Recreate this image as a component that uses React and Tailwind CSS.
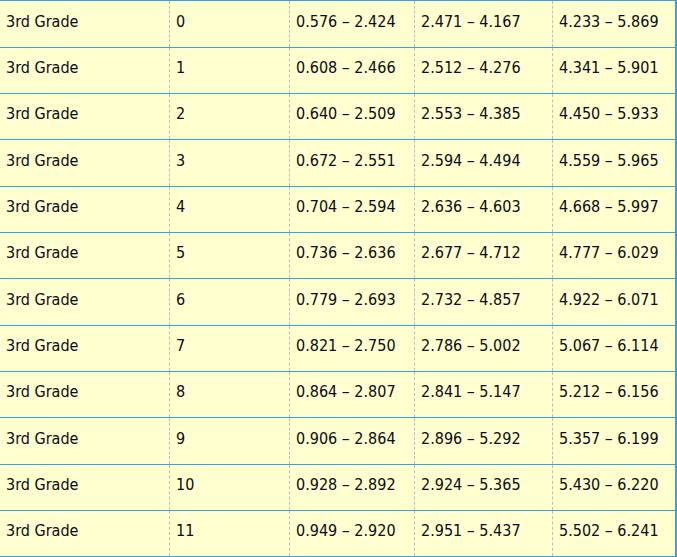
const rows = [
  ["0", "0.576 – 2.424", "2.471 – 4.167", "4.233 – 5.869"],
  ["1", "0.608 – 2.466", "2.512 – 4.276", "4.341 – 5.901"],
  ["2", "0.640 – 2.509", "2.553 – 4.385", "4.450 – 5.933"],
  ["3", "0.672 – 2.551", "2.594 – 4.494", "4.559 – 5.965"],
  ["4", "0.704 – 2.594", "2.636 – 4.603", "4.668 – 5.997"],
  ["5", "0.736 – 2.636", "2.677 – 4.712", "4.777 – 6.029"],
  ["6", "0.779 – 2.693", "2.732 – 4.857", "4.922 – 6.071"],
  ["7", "0.821 – 2.750", "2.786 – 5.002", "5.067 – 6.114"],
  ["8", "0.864 – 2.807", "2.841 – 5.147", "5.212 – 6.156"],
  ["9", "0.906 – 2.864", "2.896 – 5.292", "5.357 – 6.199"],
  ["10", "0.928 – 2.892", "2.924 – 5.365", "5.430 – 6.220"],
  ["11", "0.949 – 2.920", "2.951 – 5.437", "5.502 – 6.241"],
];

// row heights follow a 46.33px pitch
const heights = ["h-[47px]", "h-[46px]", "h-[46px]"];

const cell = "flex items-center pl-[6px] pb-[5px] border-r border-dashed border-[#bdbdbd]";

function Range({ text }) {
  const [a, b] = text.split(" – ");
  return (
    <span className="whitespace-pre">
      {a} <span style={{ fontStretch: "normal" }}>–</span> {b}
    </span>
  );
}

export default function App() {
  return (
    <div
      className="w-[677px] h-[557px] bg-white text-[#0a0a14] text-[16px]"
      style={{ fontFamily: '"DejaVu Sans", sans-serif', fontStretch: "condensed" }}
    >
      <div className="border-t border-[#38a2dc] bg-[#ffffcf]">
        {rows.map((r, i) => (
          <div
            key={i}
            className={`flex border-b border-[#38a2dc] ${heights[i % 3]}`}
          >
            <div className={`${cell} w-[170px]`}>3rd Grade</div>
            <div className={`${cell} w-[120px]`}>{r[0]}</div>
            <div className={`${cell} w-[125px]`}>
              <Range text={r[1]} />
            </div>
            <div className={`${cell} w-[138px]`}>
              <Range text={r[2]} />
            </div>
            <div className="flex items-center pl-[6px] pb-[5px] w-[124px] border-r-2 border-[#38a2dc]">
              <Range text={r[3]} />
            </div>
          </div>
        ))}
      </div>
    </div>
  );
}
